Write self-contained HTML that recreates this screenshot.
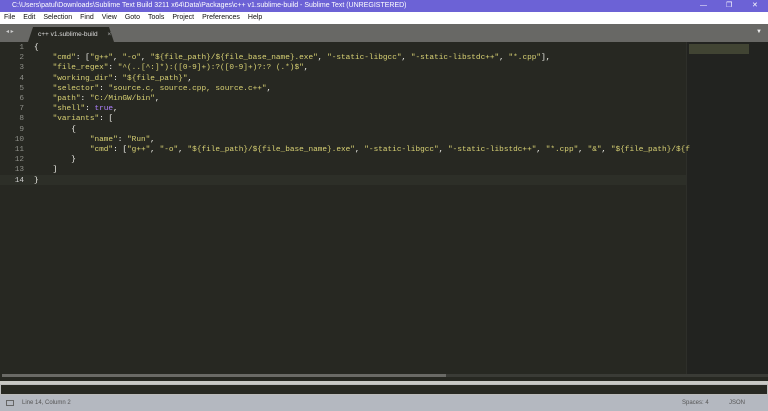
<!DOCTYPE html><html><head><style>
*{margin:0;padding:0;box-sizing:border-box}
body{width:768px;height:411px;overflow:hidden;background:#272822;font-family:"Liberation Sans",sans-serif;position:relative}
.abs{position:absolute}
#title{left:0;top:0;width:768px;height:12px;background:#6c62d6;color:#fff;font-size:7px;line-height:12px;padding-left:12px;white-space:nowrap}
#menu{left:0;top:12px;width:768px;height:12px;background:#fff;color:#111;font-size:7px;line-height:12px;white-space:nowrap}
#menu span{margin-left:4px;margin-right:4px}
#tabs{left:0;top:24px;width:768px;height:18px;background:#686865}
#tab{left:28px;top:27px;width:86px;height:15px;background:#272822;color:#ddd;font-size:6.5px;line-height:15px;padding-left:10px;clip-path:polygon(5px 0,81px 0,86px 100%,0 100%)}
#code{left:0;top:43px;font-family:"Liberation Mono",monospace;font-size:7.75px;line-height:10.2px;color:#f8f8f2;white-space:pre}
.ln{display:inline-block;width:24px;text-align:right;color:#8f908a;margin-right:10px}
.s{color:#d9d274}.t{color:#ae81ff}
#mini{left:686px;top:42px;width:82px;height:332px;background:#222320;border-left:1px solid #2e2f2a}
#hs{left:2px;top:374px;width:768px;height:3px;background:#3a3b36}
#hs2{left:2px;top:374px;width:444px;height:3px;background:#6a6a66}
#sep{left:0;top:381px;width:768px;height:3px;background:#c8c8c4}
#panel{left:0;top:384px;width:768px;height:11px;background:#272822;border:1px solid #bbb}
#status{left:0;top:395px;width:768px;height:16px;background:#b4b8c0;color:#555;font-size:6px;line-height:16px}
</style></head><body>
<div id="title" class="abs">C:\Users\patul\Downloads\Sublime Text Build 3211 x64\Data\Packages\c++ v1.sublime-build - Sublime Text (UNREGISTERED)<span style="position:absolute;left:700px">—</span><span style="position:absolute;left:726px">❐</span><span style="position:absolute;left:752px">✕</span></div>
<div id="menu" class="abs"><span>File</span><span>Edit</span><span>Selection</span><span>Find</span><span>View</span><span>Goto</span><span>Tools</span><span>Project</span><span>Preferences</span><span>Help</span></div>
<div id="tabs" class="abs"><span style="position:absolute;left:6px;top:4px;color:#ccc;font-size:6px">◂ ▸</span><span style="position:absolute;left:756px;top:5px;color:#eee;font-size:6px">▼</span></div>
<div id="tab" class="abs">c++ v1.sublime-build <span style="margin-left:8px;color:#aaa">×</span></div>
<div id="mini" class="abs"><div style="margin:2px 0 0 2px;width:60px;height:10px;background:#4a4c38;opacity:.8"></div></div>
<div class="abs" style="left:0;top:175px;width:686px;height:10px;background:#3a3b35;opacity:.35"></div>
<div id="code" class="abs"><span class="ln">1</span>{
<span class="ln">2</span>    <span class="s">"cmd"</span>: [<span class="s">"g++"</span>, <span class="s">"-o"</span>, <span class="s">"${file_path}/${file_base_name}.exe"</span>, <span class="s">"-static-libgcc"</span>, <span class="s">"-static-libstdc++"</span>, <span class="s">"*.cpp"</span>],
<span class="ln">3</span>    <span class="s">"file_regex"</span>: <span class="s">"^(..[^:]*):([0-9]+):?([0-9]+)?:? (.*)$"</span>,
<span class="ln">4</span>    <span class="s">"working_dir"</span>: <span class="s">"${file_path}"</span>,
<span class="ln">5</span>    <span class="s">"selector"</span>: <span class="s">"source.c, source.cpp, source.c++"</span>,
<span class="ln">6</span>    <span class="s">"path"</span>: <span class="s">"C:/MinGW/bin"</span>,
<span class="ln">7</span>    <span class="s">"shell"</span>: <span class="t">true</span>,
<span class="ln">8</span>    <span class="s">"variants"</span>: [
<span class="ln">9</span>        {
<span class="ln">10</span>            <span class="s">"name"</span>: <span class="s">"Run"</span>,
<span class="ln">11</span>            <span class="s">"cmd"</span>: [<span class="s">"g++"</span>, <span class="s">"-o"</span>, <span class="s">"${file_path}/${file_base_name}.exe"</span>, <span class="s">"-static-libgcc"</span>, <span class="s">"-static-libstdc++"</span>, <span class="s">"*.cpp"</span>, <span class="s">"&amp;"</span>, <span class="s">"${file_path}/${f</span>
<span class="ln">12</span>        }
<span class="ln">13</span>    ]
<span class="ln" style="color:#ccc">14</span>}</div>
<div id="hs" class="abs"></div><div id="hs2" class="abs"></div>
<div id="sep" class="abs"></div>
<div id="panel" class="abs"></div>
<div id="status" class="abs"><span style="position:absolute;left:6px;top:5px;width:8px;height:6px;border:1px solid #666"></span><span style="position:absolute;left:22px">Line 14, Column 2</span><span style="position:absolute;left:682px">Spaces: 4</span><span style="position:absolute;left:729px">JSON</span></div>
</body></html>
